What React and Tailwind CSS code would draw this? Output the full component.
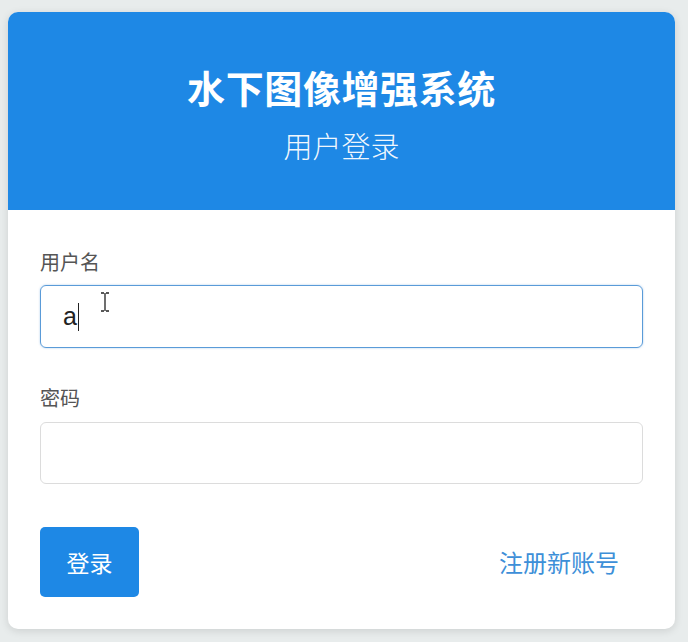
export default function App() {
  const cjk = { fontFamily: '"Noto Sans CJK SC", "Noto Sans", sans-serif' };
  return (
    <div className="w-[688px] h-[642px] bg-[#e8ecec] pt-[12px] pl-[8px] overflow-hidden" style={cjk}>
      <div className="w-[667px] bg-white rounded-[10px] shadow-[0_2px_8px_rgba(0,0,0,0.12)] overflow-hidden">
        <div className="h-[198px] bg-[#1e88e5] flex flex-col items-center pt-[52px]">
          <div className="text-white text-[38px] leading-[46px] font-bold tracking-[0.6px]">水下图像增强系统</div>
          <div className="text-white/95 text-[29px] leading-[34px] mt-[18px] font-light">用户登录</div>
        </div>
        <div className="px-8 pt-[38px] pb-[32px]">
          <div className="text-[20px] leading-[28px] text-[#555]">用户名</div>
          <div className="relative mt-[9px] h-[63px] border border-[#5a9bd8] rounded-[6px] shadow-[0_0_2px_rgba(74,144,217,0.5)] flex items-center pl-[22px]">
            <span className="text-[25px] text-[#222] leading-none" style={{ fontFamily: '"Liberation Sans", Arial, sans-serif' }}>a</span>
            <span className="w-[1.5px] h-[28px] bg-[#222] ml-[1px]"></span>
            <svg className="absolute left-[59px] top-[6px]" width="10" height="20" viewBox="0 0 10 20">
              <path d="M1 1h3M6 1h3M5 1v18M1 19h3M6 19h3" stroke="#222" strokeWidth="1.3" fill="none" />
            </svg>
          </div>
          <div className="text-[20px] leading-[28px] text-[#555] mt-[36px]">密码</div>
          <div className="mt-[10px] h-[62px] border border-[#dcdcdc] rounded-[6px]"></div>
          <div className="mt-[43px] flex items-center justify-between">
            <button className="w-[99px] h-[70px] bg-[#1e88e5] text-white text-[23px] rounded-[5px]">登录</button>
            <span className="text-[#3d8fd8] text-[24px] mr-[24px]">注册新账号</span>
          </div>
        </div>
      </div>
    </div>
  );
}
